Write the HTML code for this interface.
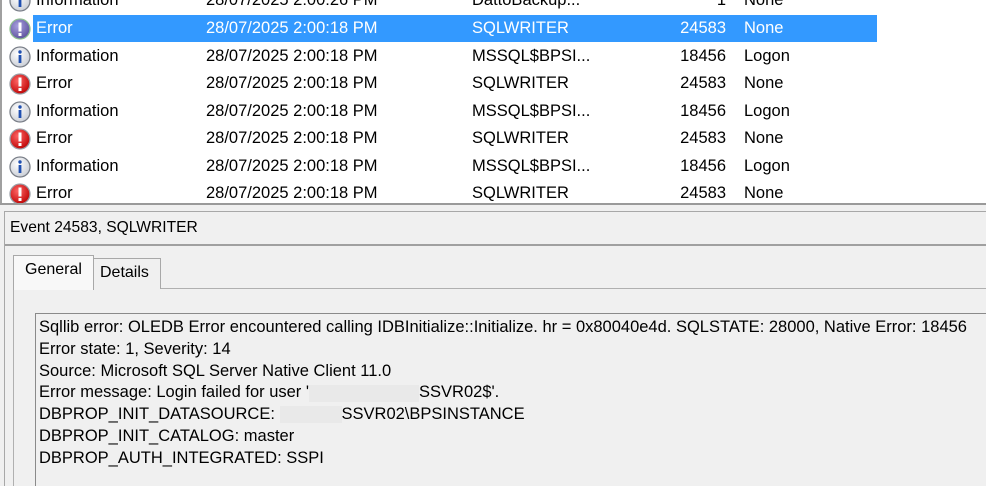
<!DOCTYPE html>
<html><head><meta charset="utf-8"><style>
*{margin:0;padding:0;box-sizing:border-box}
html,body{width:986px;height:486px;overflow:hidden}
body{background:#f0f0f0;font-family:"Liberation Sans",sans-serif;font-size:16.5px;color:#000;position:relative}
.list{position:absolute;left:0;top:0;width:986px;height:203px;background:#fff;border-left:2px solid #a0a0a0;overflow:hidden}
.row{position:absolute;left:0;height:27px;width:986px;line-height:27px}
.row span{position:absolute;white-space:nowrap}
.sel{position:absolute;left:31px;width:844px;height:27px;background:#3399ff}
.ic{position:absolute;left:7px;top:3px;width:22px;height:22px}
.l{left:34px}.d{left:204px}.s{left:470px}.e{left:640px;width:84px;text-align:right}.t{left:742px}
.w span{color:#fff}
.hr{position:absolute;left:0;width:986px;height:1px;background:#a0a0a0}
.box{position:absolute;left:35px;top:313px;width:960px;height:175px;border:1px solid #8a8a8a;border-right:none;border-bottom:none;padding:3px 0 0 3px;line-height:21.8px;font-size:16.5px;white-space:nowrap}
.blur{display:inline-block;background:#e9e9e9;height:17px;vertical-align:middle}
</style></head><body>
<svg width="0" height="0" style="position:absolute"><defs>
<radialGradient id="gi" cx="40%" cy="35%" r="70%"><stop offset="0" stop-color="#fff"/><stop offset="1" stop-color="#c8ccd4"/></radialGradient>
<radialGradient id="ge" cx="40%" cy="35%" r="70%"><stop offset="0" stop-color="#f66"/><stop offset="1" stop-color="#b00"/></radialGradient>
<radialGradient id="gs" cx="40%" cy="35%" r="70%"><stop offset="0" stop-color="#a8a0e0"/><stop offset="1" stop-color="#5a4f9a"/></radialGradient>
<g id="info"><circle cx="11" cy="11" r="10" fill="url(#gi)" stroke="#7a7f88" stroke-width="1.3"/><circle cx="11" cy="6" r="1.7" fill="#1f4fb0"/><rect x="9.6" y="9" width="2.8" height="8" fill="#1f4fb0"/></g>
<g id="err"><circle cx="11" cy="11" r="10" fill="url(#ge)" stroke="#9aa0a8" stroke-width="1.3"/><rect x="9.5" y="4.5" width="3" height="9" fill="#fff"/><rect x="9.5" y="15" width="3" height="3" fill="#fff"/></g>
<g id="errs"><circle cx="11" cy="11" r="10" fill="url(#gs)" stroke="#8fbf8f" stroke-width="1.3"/><rect x="9.5" y="4.5" width="3" height="9" fill="#fff"/><rect x="9.5" y="15" width="3" height="3" fill="#fff"/></g>
</defs></svg>
<div class="list">
<div class="row" style="top:-13px"><svg class="ic"><use href="#info"/></svg><span class="l">Information</span><span class="d">28/07/2025 2:00:26 PM</span><span class="s">DattoBackup...</span><span class="e">1</span><span class="t">None</span></div>
<div class="row w" style="top:15px"><div class="sel"></div><svg class="ic"><use href="#errs"/></svg><span class="l">Error</span><span class="d">28/07/2025 2:00:18 PM</span><span class="s">SQLWRITER</span><span class="e">24583</span><span class="t">None</span></div>
<div class="row" style="top:43px"><svg class="ic"><use href="#info"/></svg><span class="l">Information</span><span class="d">28/07/2025 2:00:18 PM</span><span class="s">MSSQL$BPSI...</span><span class="e">18456</span><span class="t">Logon</span></div>
<div class="row" style="top:70px"><svg class="ic"><use href="#err"/></svg><span class="l">Error</span><span class="d">28/07/2025 2:00:18 PM</span><span class="s">SQLWRITER</span><span class="e">24583</span><span class="t">None</span></div>
<div class="row" style="top:98px"><svg class="ic"><use href="#info"/></svg><span class="l">Information</span><span class="d">28/07/2025 2:00:18 PM</span><span class="s">MSSQL$BPSI...</span><span class="e">18456</span><span class="t">Logon</span></div>
<div class="row" style="top:125px"><svg class="ic"><use href="#err"/></svg><span class="l">Error</span><span class="d">28/07/2025 2:00:18 PM</span><span class="s">SQLWRITER</span><span class="e">24583</span><span class="t">None</span></div>
<div class="row" style="top:153px"><svg class="ic"><use href="#info"/></svg><span class="l">Information</span><span class="d">28/07/2025 2:00:18 PM</span><span class="s">MSSQL$BPSI...</span><span class="e">18456</span><span class="t">Logon</span></div>
<div class="row" style="top:180px"><svg class="ic"><use href="#err"/></svg><span class="l">Error</span><span class="d">28/07/2025 2:00:18 PM</span><span class="s">SQLWRITER</span><span class="e">24583</span><span class="t">None</span></div>
</div>
<div class="hr" style="top:203px;height:2px;background:#9a9a9a"></div>
<div class="hr" style="top:211px;background:#a8a8a8;left:4px"></div>
<div style="position:absolute;left:4px;top:211px;width:1px;height:275px;background:#a8a8a8"></div>
<div style="position:absolute;left:10px;top:219px;font-size:15.6px">Event 24583, SQLWRITER</div>
<div class="hr" style="top:244px;left:5px;height:2px;background:#a0a0a0"></div>
<div style="position:absolute;left:13px;top:288px;width:973px;height:198px;border:1px solid #b0b0b0;border-right:none;border-bottom:none;background:#f0f0f0"></div>
<div style="position:absolute;left:93px;top:258px;width:68px;height:31px;border:1px solid #a8a8a8;border-bottom:none;background:#f0f0f0;padding:5px 0 0 6px;font-size:16px">Details</div>
<div style="position:absolute;left:13px;top:255px;width:81px;height:35px;border:1px solid #a8a8a8;border-bottom:none;background:#f8f8f8;padding:5px 0 0 11px;font-size:16px">General</div>
<div class="box">Sqllib error: OLEDB Error encountered calling IDBInitialize::Initialize. hr = 0x80040e4d. SQLSTATE: 28000, Native Error: 18456<br>
Error state: 1, Severity: 14<br>
Source: Microsoft SQL Server Native Client 11.0<br>
Error message: Login failed for user '<span class="blur" style="width:110px"></span>SSVR02$'.<br>
DBPROP_INIT_DATASOURCE: <span class="blur" style="width:62px"></span>SSVR02\BPSINSTANCE<br>
DBPROP_INIT_CATALOG: master<br>
DBPROP_AUTH_INTEGRATED: SSPI</div>
</body></html>
